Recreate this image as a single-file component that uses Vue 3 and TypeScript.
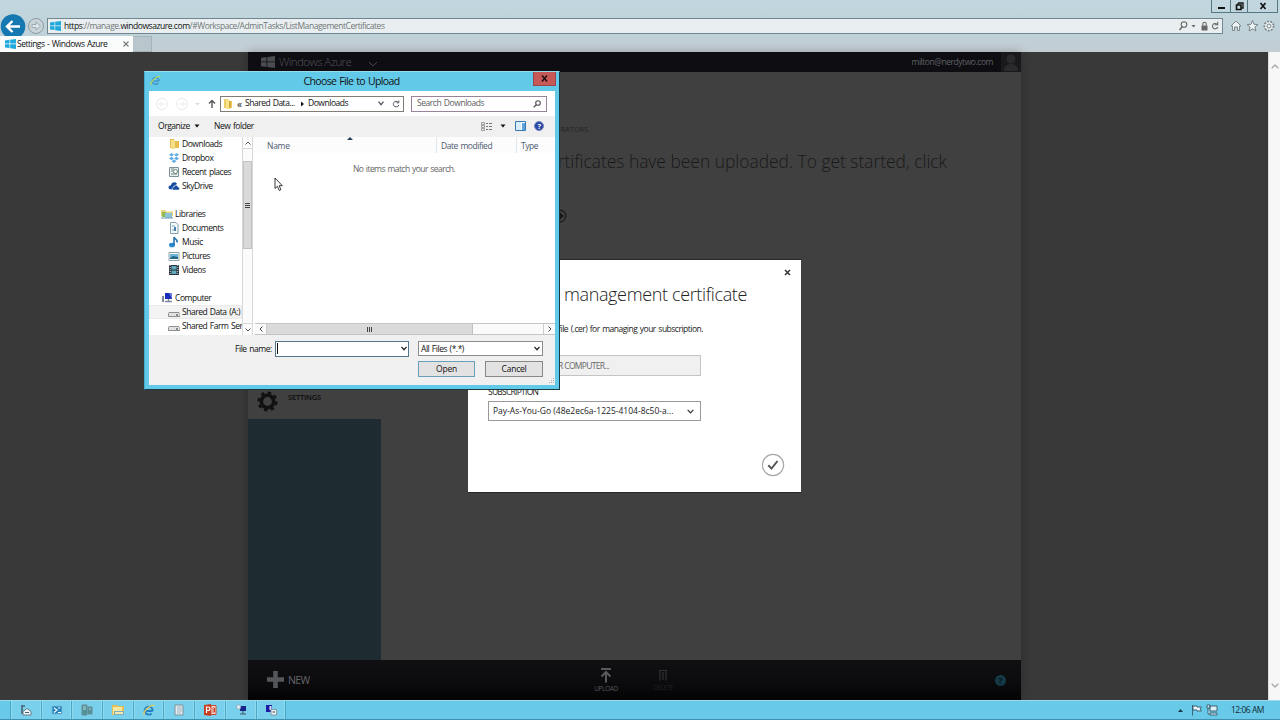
<script setup lang="ts">
interface NavItem {
  label: string
  icon: string
  root?: boolean
  selected?: boolean
}

const navItems: NavItem[] = [
  { label: 'Downloads', icon: 'folder' },
  { label: 'Dropbox', icon: 'dropbox' },
  { label: 'Recent places', icon: 'recent' },
  { label: 'SkyDrive', icon: 'cloud' },
  { label: '', icon: '' },
  { label: 'Libraries', icon: 'library', root: true },
  { label: 'Documents', icon: 'document' },
  { label: 'Music', icon: 'music' },
  { label: 'Pictures', icon: 'picture' },
  { label: 'Videos', icon: 'video' },
  { label: '', icon: '' },
  { label: 'Computer', icon: 'computer', root: true },
  { label: 'Shared Data (A:)', icon: 'drive', selected: true },
  { label: 'Shared Farm Serv', icon: 'drive' },
]

const taskItems: string[] = ['server', 'shell', 'manager', 'explorer', 'ie', 'notepad', 'powerpoint', 'remote', 'desktop']
</script>

<template>
  <div class="screen">
    <header class="chrome">
      <div class="caption">
        <span class="cap min"><i></i></span>
        <span class="cap max">
          <svg width="9" height="9" viewBox="0 0 9 9"><path d="M3 1h5v5H6.500M3 1v1.500" fill="none" stroke="#111" stroke-width="1.300" /><path d="M1.500 3h4.500v4.500H1.500z" fill="none" stroke="#111" stroke-width="1.600" /></svg>
        </span>
        <span class="cap close">
          <svg width="8" height="8" viewBox="0 0 8 8"><path d="M1.500 1l5 6M6.500 1l-5 6" stroke="#111" stroke-width="1.600" /></svg>
        </span>
      </div>
      <div class="address-row">
        <svg class="back" width="26" height="25" viewBox="0 0 26 25"><circle cx="13" cy="12.500" r="12.300" fill="#1678b0" /><path d="M20 12.500H7.500M12.500 7l-5.500 5.500 5.500 5.500" fill="none" stroke="#fff" stroke-width="2.400" /></svg>
        <svg class="forward" width="18" height="18" viewBox="0 0 18 18"><circle cx="9" cy="9" r="7.500" fill="#c9d4d8" stroke="#8d9aa1" /><path d="M5 7.500h4V5l4.500 4L9 13v-2.500H5z" fill="#dce5e8" stroke="#929ea4" stroke-width=".8" /></svg>
        <div class="address">
          <svg class="flag" width="11" height="10" viewBox="0 0 11 10"><path d="M0 1.500L4.500.8V4.600H0zM5.200.7L11 0v4.600H5.200zM0 5.300h4.500v3.800L0 8.500zM5.200 5.300H11V10l-5.800-.8z" fill="#20a9dc" /></svg>
          <span class="url"><b>https</b>://manage.<b>windowsazure.com</b>/#Workspace/AdminTasks/ListManagementCertificates</span>
          <svg class="address-tools" width="42" height="12" viewBox="0 0 42 12"><circle cx="6" cy="4.500" r="2.800" fill="none" stroke="#666" stroke-width="1.100" /><path d="M4 7L1.500 10" stroke="#666" stroke-width="1.400" /><path d="M13.500 5h4l-2 2.500z" fill="#666" /><path d="M23.500 5.500h6v5h-6z" fill="#666" /><path d="M24.800 5.500V4a1.700 1.700 0 0 1 3.400 0v1.500" fill="none" stroke="#666" stroke-width="1.100" /><path d="M38.800 4A2.700 2.700 0 1 0 39.700 7M39.700 1.800v3h-3" fill="none" stroke="#666" stroke-width="1.100" /></svg>
        </div>
        <svg class="ie-tools" width="46" height="14" viewBox="0 0 46 14"><g fill="#eef3f4" stroke="#7b858a" stroke-width="1"><path d="M1 7l5-5 5 5H9.500v4.500h-2V8h-3v3.500h-2V7z" /><path d="M22.500 1.500l1.500 3.800 4 .2-3.100 2.500 1.100 4-3.500-2.200-3.500 2.200 1.100-4L17 5.500l4-.2z" /><circle cx="39" cy="7" r="4.600" stroke-dasharray="2 1.200" stroke-width="1.800" /><circle cx="39" cy="7" r="2" /></g></svg>
      </div>
      <div class="tabs">
        <div class="tab">
          <svg class="flag" width="11" height="10" viewBox="0 0 11 10"><path d="M0 1.500L4.500.8V4.600H0zM5.200.7L11 0v4.600H5.200zM0 5.300h4.500v3.800L0 8.500zM5.200 5.300H11V10l-5.800-.8z" fill="#20a9dc" /></svg>
          <span>Settings - Windows Azure</span>
          <svg class="tab-x" width="6" height="6" viewBox="0 0 6 6"><path d="M.5.5l5 5M5.500.5l-5 5" stroke="#777" stroke-width="1.100" /></svg>
        </div>
        <div class="new-tab"></div>
      </div>
    </header>

    <main class="viewport">
      <div class="portal">
        <div class="portal-head">
          <svg class="brand-flag" width="14" height="12" viewBox="0 0 14 12"><path d="M0 1.800L5.500 1v4.500H0zM6.300.9L14 0v5.500H6.300zM0 6.300h5.500V11L0 10.200zM6.300 6.300H14V12l-7.700-1z" fill="#4b4c50" /></svg>
          <span class="brand">Windows Azure</span>
          <svg class="brand-chev" width="10" height="6" viewBox="0 0 10 6"><path d="M1 1l4 4 4-4" fill="none" stroke="#45464a" /></svg>
          <span class="account">milton@nerdytwo.com</span>
          <span class="avatar"><svg width="20" height="20" viewBox="0 0 20 20"><circle cx="10" cy="7" r="4.500" fill="#2a2a2d" /><path d="M3 19c0-5 3-7 7-7s7 2 7 7z" fill="#2a2a2d" /></svg></span>
        </div>
        <div class="portal-main">
          <aside class="side">
            <div class="settings">
              <svg width="21" height="21" viewBox="0 0 21 21"><circle cx="10.500" cy="10.500" r="6.200" fill="none" stroke="#111" stroke-width="3.600" /><circle cx="10.500" cy="10.500" r="8.800" fill="none" stroke="#111" stroke-width="2.600" stroke-dasharray="3.450 3.450" /></svg>
              <span>SETTINGS</span>
            </div>
            <div class="teal"></div>
          </aside>
          <section class="content">
            <div class="crumb">ADMINISTRATORS</div>
            <div class="empty">No management certificates have been uploaded. To get started, click</div>
            <div class="go"><svg width="14" height="14" viewBox="0 0 14 14"><circle cx="7" cy="7" r="5.800" fill="none" stroke="#191919" stroke-width="1.200" /><path d="M3 6h4V3.500L11 7l-4 3.500V8H3z" fill="#191919" /></svg></div>
          </section>
        </div>
        <footer class="commands">
          <svg class="plus" width="17" height="17" viewBox="0 0 17 17"><path d="M6.200 0h4.600v6.200H17v4.600h-6.200V17H6.200v-6.200H0V6.200h6.200z" fill="#54565a" /></svg>
          <span class="new">NEW</span>
          <div class="command upload">
            <svg width="12" height="15" viewBox="0 0 12 15"><path d="M1 1h10M6 14.500V5M1.500 8.500L6 4l4.500 4.500" fill="none" stroke="#58595b" stroke-width="2" /></svg>
            <span>UPLOAD</span>
          </div>
          <div class="command delete">
            <svg width="10" height="13" viewBox="0 0 10 13"><path d="M1 1.500h8M2 2v9.500M8 2v9.500M5 3v8" fill="none" stroke="#303032" stroke-width="1.200" /></svg>
            <span>DELETE</span>
          </div>
          <span class="help">?</span>
        </footer>
      </div>
      <div class="scrollbar">
        <svg width="8" height="5" viewBox="0 0 8 5"><path d="M.7 4.300L4 1l3.300 3.300" fill="none" stroke="#aaa" stroke-width="1.400" /></svg>
        <svg width="8" height="5" viewBox="0 0 8 5"><path d="M.7.7L4 4 7.300.7" fill="none" stroke="#aaa" stroke-width="1.400" /></svg>
      </div>
    </main>

    <section class="modal">
      <svg class="modal-x" width="7" height="7" viewBox="0 0 7 7"><path d="M1 1l5 5M6 1L1 6" stroke="#333" stroke-width="1.500" /></svg>
      <h1>Upload a management certificate</h1>
      <p>Upload a certificate file (.cer) for managing your subscription.</p>
      <div class="browse"><span>BROWSE YOUR COMPUTER...</span></div>
      <div class="label">SUBSCRIPTION</div>
      <div class="subscription">
        <span>Pay-As-You-Go (48e2ec6a-1225-4104-8c50-a...</span>
        <svg width="7" height="5" viewBox="0 0 7 5"><path d="M.7.8l2.800 3L6.300.8" fill="none" stroke="#333" stroke-width="1.200" /></svg>
      </div>
      <svg class="accept" width="24" height="24" viewBox="0 0 24 24"><circle cx="12" cy="12" r="10.600" fill="#fff" stroke="#aaa" stroke-width="1.200" /><path d="M7.300 12.300l3.200 3.300L16.500 8" fill="none" stroke="#555" stroke-width="2" /></svg>
    </section>

    <section class="dialog">
      <div class="dialog-title">
        <svg class="dialog-ie" width="13" height="13" viewBox="0 0 13 13"><path d="M10 7H4.500M10 7A3.400 3.400 0 1 0 9.300 9" fill="none" stroke="#4594cc" stroke-width="1.500" /><path d="M2 11C1 9 6 2 11.500 2.500" fill="none" stroke="#b9d957" stroke-width="1.200" /></svg>
        <span>Choose File to Upload</span>
        <div class="dialog-close"><svg width="7" height="7" viewBox="0 0 7 7"><path d="M1 .5l5 6M6 .5l-5 6" stroke="#21110f" stroke-width="1.500" /></svg></div>
      </div>
      <div class="dialog-body">
        <div class="dialog-nav">
          <svg class="history" width="52" height="14" viewBox="0 0 52 14"><g fill="none" stroke="#e9e9e9"><circle cx="7" cy="7" r="5.500" /><path d="M10 7H4M6.500 4.500L4 7l2.500 2.500" /><circle cx="27" cy="7" r="5.500" /><path d="M24 7h6M27.500 4.500L30 7l-2.500 2.500" /></g><path d="M40 6h5l-2.500 2.500z" fill="#ddd" /></svg>
          <svg class="up" width="8" height="9" viewBox="0 0 8 9"><path d="M4 9V1.500M1 4.500l3-3 3 3" fill="none" stroke="#555" stroke-width="1.400" /></svg>
          <div class="path">
            <svg class="path-folder" width="10" height="11" viewBox="0 0 10 11"><path d="M1 1h4l1 2h3v7H1z" fill="#edcd67" /><path d="M3 2h4v9H3z" fill="#f8e58e" /><path d="M6 3h2v7H6z" fill="#d8aa3a" /></svg>
            <span class="laquo">«</span><span class="crumb-a">Shared Data...</span>
            <svg class="crumb-arrow" width="5" height="6" viewBox="0 0 5 6"><path d="M1 .5L4 3 1 5.500z" fill="#111" /></svg>
            <span class="crumb-b">Downloads</span>
            <svg class="path-chev" width="6" height="5" viewBox="0 0 6 5"><path d="M.5.7L3 3.700 5.500.7" fill="none" stroke="#555" stroke-width="1.300" /></svg>
            <svg class="path-refresh" width="8" height="8" viewBox="0 0 8 8"><path d="M6.200 2.200A2.800 2.800 0 1 0 6.800 5M6.800.5v2.300H4.500" fill="none" stroke="#555" stroke-width="1" /></svg>
          </div>
          <div class="search">
            <span>Search Downloads</span>
            <svg width="8" height="8" viewBox="0 0 8 8"><circle cx="5" cy="3" r="2.300" fill="none" stroke="#555" stroke-width="1.100" /><path d="M3.300 4.700L.7 7.300" stroke="#555" stroke-width="1.300" /></svg>
          </div>
        </div>
        <div class="toolbar">
          <span class="organize">Organize</span>
          <svg class="drop-a" width="6" height="4" viewBox="0 0 6 4"><path d="M.5.5h5L3 3.500z" fill="#111" /></svg>
          <span class="new-folder">New folder</span>
          <svg class="view" width="11" height="9" viewBox="0 0 11 9"><path d="M.5.5h3v2h-3zM.5 3.500h3v2h-3zM.5 6.500h3v2h-3z" fill="none" stroke="#888" stroke-width=".8" /><path d="M5 1.500h2M8 1.500h3M5 4.500h2M8 4.500h3M5 7.500h2M8 7.500h3" stroke="#666" stroke-width=".9" /></svg>
          <svg class="drop-b" width="6" height="4" viewBox="0 0 6 4"><path d="M.5.5h5L3 3.500z" fill="#111" /></svg>
          <svg class="pane" width="11" height="10" viewBox="0 0 11 10"><path d="M.5.5h10v9H.5z" fill="#fff" stroke="#3879b4" /><path d="M1 1h5v8H1z" fill="#d7edfa" /><path d="M7 2h3v7H7z" fill="#5da4dc" /></svg>
          <svg class="query" width="10" height="10" viewBox="0 0 10 10"><circle cx="5" cy="5" r="4.500" fill="#2a48a4" stroke="#7487bb" /><text x="5" y="7.600" text-anchor="middle" font-family="Open Sans, sans-serif" font-size="7.500" font-weight="700" fill="#fff">?</text></svg>
        </div>
        <div class="browser">
          <div class="tree">
            <div v-for="(item, i) in navItems" :key="i" class="node" :class="{ root: item.root, selected: item.selected }">
              <svg v-if="item.icon" width="12" height="12" viewBox="0 0 12 12">
                <g v-if="item.icon === 'folder'"><path d="M2 1h4l1 2h4v7H2z" fill="#e4be50" /><path d="M3 2h4v9H3z" fill="#f7df86" /></g>
                <path v-else-if="item.icon === 'dropbox'" d="M3.500 1L6 2.800 3.500 4.500 1 2.800zM8.500 1L11 2.800 8.500 4.500 6 2.800zM3.500 4.800L6 6.500 3.500 8.200 1 6.500zM8.500 4.800L11 6.500 8.500 8.200 6 6.500zM6 7.500l2.500 1.800L6 11 3.500 9.300z" fill="#5fade2" />
                <g v-else-if="item.icon === 'recent'"><path d="M1.500 1.500h9v9h-9z" fill="#e6eeee" stroke="#7d9298" /><path d="M3 3h3M3 5h2M3 8h6" stroke="#77888b" /><circle cx="7.500" cy="5.500" r="2" fill="#fff" stroke="#60866b" /></g>
                <g v-else-if="item.icon === 'cloud'"><path d="M1 9C-.5 6 2 5 3 5.500c0-3.500 5-4.500 6-1.500L6 6 4 9.500z" fill="#174da0" /><path d="M4.500 10c-1-2 .5-3 1.500-3 .5-2.500 3.500-2 4 0 1.800 0 2 2.500.5 3z" fill="#174da0" stroke="#fff" stroke-width=".5" /></g>
                <g v-else-if="item.icon === 'library'"><path d="M0 2h4l1 1.500h7V8H0z" fill="#ead47b" /><path d="M1 4h4v5H1z" fill="#91bc55" /><path d="M4 5h7v5H4z" fill="#8bc3d9" /><path d="M0 9.500h12v1H0z" fill="#719dac" /></g>
                <g v-else-if="item.icon === 'document'"><path d="M2.500.5H8l2 2v9H2.500z" fill="#f5fafc" stroke="#849eac" /><path d="M4 4h3M4 8h4" stroke="#68a1c6" /><path d="M6 5h2v4H6z" fill="#497eac" /></g>
                <g v-else-if="item.icon === 'music'"><ellipse cx="4" cy="9" rx="3" ry="2.300" fill="#278ace" /><path d="M6 9V1c0 2 4 2 3 5.500" fill="none" stroke="#2676ae" stroke-width="1.600" /></g>
                <g v-else-if="item.icon === 'picture'"><path d="M1 2.500h10v8H1z" fill="#fff" stroke="#8ca5ad" /><path d="M2 4h8v4H2z" fill="#6eb6da" /><path d="M2 8l3-2 5 1v2H2z" fill="#256988" /></g>
                <g v-else-if="item.icon === 'video'"><path d="M1 1h10v10H1z" fill="#27343d" /><path d="M3.500 2h5v3.500h-5zM3.500 6.500h5V10h-5z" fill="#61a9bd" /><path d="M2.200 1v10M9.800 1v10" stroke="#d5d8d8" stroke-dasharray="1 1" /></g>
                <g v-else-if="item.icon === 'computer'"><path d="M4 1h7v6H4z" fill="#1c2db8" /><path d="M8 1l3 6V1z" fill="#6c7dde" /><path d="M1 4h2v6H1z" fill="#7c8899" /><path d="M4 9.500h7M7.500 7v3" stroke="#7c8899" stroke-width="1.300" /></g>
                <g v-else><path d="M1 6.500h10l1 1v3H.5v-3z" fill="#e2e2e2" stroke="#848484" stroke-width=".9" /><path d="M8 9h2" stroke="#333" /></g>
              </svg>
              <span>{{ item.label }}</span>
            </div>
          </div>
          <div class="vscroll">
            <div class="arrow-box"><svg width="6" height="4" viewBox="0 0 6 4"><path d="M.5 3.500L3 1l2.500 2.500" fill="none" stroke="#555" /></svg></div>
            <div class="vthumb"><i></i><i></i><i></i></div>
            <div class="arrow-box low"><svg width="6" height="4" viewBox="0 0 6 4"><path d="M.5.5L3 3 5.500.5" fill="none" stroke="#555" /></svg></div>
          </div>
          <div class="files">
            <div class="columns">
              <span class="c-name">Name<svg width="6" height="3" viewBox="0 0 6 3"><path d="M0 3h6L3 0z" fill="#263b55" /></svg></span>
              <span class="c-date">Date modified</span>
              <span class="c-type">Type</span>
            </div>
            <div class="no-items"><span>No items match your search.</span></div>
            <div class="hscroll">
              <div class="harrow"><svg width="4" height="6" viewBox="0 0 4 6"><path d="M3.500.5L1 3l2.500 2.500" fill="none" stroke="#444" /></svg></div>
              <div class="hthumb"><i></i><i></i><i></i></div>
              <div class="harrow end"><svg width="4" height="6" viewBox="0 0 4 6"><path d="M.5.5L3 3 .5 5.500" fill="none" stroke="#444" /></svg></div>
            </div>
          </div>
        </div>
        <div class="dialog-foot">
          <div class="file-row">
            <span class="file-label">File name:</span>
            <div class="file-input"><i></i><svg width="6" height="5" viewBox="0 0 6 5"><path d="M.5.8L3 3.700 5.500.8" fill="none" stroke="#222" stroke-width="1.300" /></svg></div>
            <div class="filter"><span>All Files (*.*)</span><svg width="6" height="5" viewBox="0 0 6 5"><path d="M.5.8L3 3.700 5.500.8" fill="none" stroke="#222" stroke-width="1.300" /></svg></div>
          </div>
          <div class="button-row">
            <div class="btn primary">Open</div>
            <div class="btn">Cancel</div>
          </div>
          <svg class="grip" width="6" height="6" viewBox="0 0 6 6"><path d="M5 0h1v1H5zM5 2h1v1H5zM5 4h1v1H5zM3 2h1v1H3zM3 4h1v1H3zM1 4h1v1H1z" fill="#aaa" /></svg>
        </div>
      </div>
    </section>

    <svg class="cursor" width="9" height="15" viewBox="0 0 9 15"><path d="M1 1v10.500l2.400-2.200L5.200 13.500l1.700-.8L5.200 8.700h3.100z" fill="#fff" stroke="#222" stroke-width=".9" /></svg>

    <footer class="taskbar">
      <div v-for="task in taskItems" :key="task" class="task" :class="task">
        <svg width="14" height="14" viewBox="0 0 14 14">
          <g v-if="task === 'server'"><path d="M3 2v9M3 3h3" stroke="#4a6572" stroke-width="1.600" /><path d="M4 8.500l4-3 4 3v3.500H4z" fill="#f2f6f8" stroke="#667d88" /><path d="M6 9.500h4" stroke="#456572" /></g>
          <g v-else-if="task === 'shell'"><path d="M2 3h10v8H2z" fill="#2183bd" stroke="#75bbda" /><path d="M4 5l3 2-3 2.500M8 9.500h3M8 5h2" fill="none" stroke="#fff" stroke-width="1.200" /></g>
          <g v-else-if="task === 'manager'"><path d="M2 2h5v10H2zM8 4h4v7H8z" fill="#4e929d" stroke="#668b93" /><path d="M3 4h3M3 6h3M9 6h2" stroke="#bcd8d4" /></g>
          <g v-else-if="task === 'explorer'"><path d="M1 2h5l1 1h6v9H1z" fill="#e3bd55" /><path d="M2 4h9v7H2z" fill="#f6e9a1" /><path d="M3 8h10v4H3z" fill="#81acc0" /><path d="M4 9h8v2H4z" fill="#f3e8ad" /></g>
          <g v-else-if="task === 'ie'"><path d="M10.700 8H4M10.700 8A4 4 0 1 0 9.500 10.500" fill="none" stroke="#2682c4" stroke-width="1.900" /><path d="M2 12C1 9 8 1 12.500 2.500" fill="none" stroke="#e4cd55" stroke-width="1.300" /></g>
          <g v-else-if="task === 'notepad'"><path d="M3 2h8v10H3z" fill="#e6edf1" stroke="#7f929c" /><path d="M5 4h5M5 6h5M5 8h5M5 10h4" stroke="#a0b4c0" /></g>
          <g v-else-if="task === 'powerpoint'"><path d="M1 2l7-1v12l-7-1z" fill="#c43d21" /><path d="M8 2.500h5v9H8z" fill="#faded5" stroke="#c64a2f" /><path d="M3.500 10V4h1.700a1.500 1.500 0 0 1 0 3.500H3.500" fill="none" stroke="#fff" stroke-width="1.200" /><path d="M9.300 5h2.200v2H9.300M9.300 9h2.200V7" fill="none" stroke="#c43d21" /></g>
          <g v-else-if="task === 'remote'"><path d="M6 3h6v5H6z" fill="#1b248c" /><circle cx="4.500" cy="4" r="2.300" fill="#dce9f0" stroke="#7fa4b8" stroke-width=".8" /><path d="M9 8v3M6 11h6" stroke="#435663" /></g>
          <g v-else><path d="M2 2h6v7H2z" fill="#1c1da2" /><path d="M5.500 3h2v4h-2z" fill="#dbe6fa" /><path d="M7 6.500h5.500V12H7z" fill="#edf3f5" stroke="#8298a4" /><path d="M8.500 9h2.500" stroke="#345" /></g>
        </svg>
      </div>
      <div class="tray">
        <svg width="42" height="14" viewBox="0 0 42 14"><path d="M1 9h5L3.500 6z" fill="#183a48" /><path d="M15.500 2v10.500M16 3h4v1h4.500L23 6l1.500 2H20V7h-4z" fill="#eaf6f9" stroke="#315a6a" stroke-width=".9" /><path d="M33 3h7v5h-7zM33 10h7v2h-7zM31 5v6h2M30 2h3v3h-3z" fill="#dceff5" stroke="#315a6a" stroke-width=".9" /></svg>
        <span>12:06 AM</span>
      </div>
    </footer>
  </div>
</template>

<style>
html, body { margin: 0; overflow: hidden; background: #393939; }
</style>

<style scoped>
* { box-sizing: border-box; }
.screen { position: relative; width: 1280px; height: 720px; display: flex; flex-direction: column; overflow: hidden; font-family: "Open Sans", "Noto Sans", sans-serif; font-size: 8.5px; color: #222; line-height: 1; white-space: nowrap; }
svg { display: block; flex: none; }
span { flex: none; }

.chrome { height: 52px; background: linear-gradient(#c2d7df, #bfd2da 60%, #c3cdd2); display: flex; flex-direction: column; flex: none; }
.caption { height: 13px; display: flex; justify-content: flex-end; padding-right: 2px; }
.cap { height: 13px; border: 1px solid #557883; border-top: 0; border-right: 0; display: flex; align-items: center; justify-content: center; }
.min { width: 19px; }
.min i { width: 7px; height: 2px; background: #111; margin-top: 3px; }
.max { width: 17px; }
.close { width: 31px; border-right: 1px solid #557883; }
.address-row { height: 23px; display: flex; align-items: center; padding-top: 3px; }
.forward { margin: 0 2px 0 1px; }
.address { width: 1176px; height: 16px; background: #e9eff0; border: 1px solid #71868f; display: flex; align-items: center; padding: 0 2px; }
.url { margin-left: 3px; margin-right: auto; padding-top: 1px; color: #727779; letter-spacing: -.45px; }
.url b { font-weight: 400; color: #111; }
.ie-tools { margin-left: 7px; }
.tabs { display: flex; height: 16px; }
.tab { width: 133px; background: #fafcfc; display: flex; align-items: center; padding-left: 5px; color: #111; letter-spacing: -.5px; word-spacing: .8px; }
.tab span { padding-top: 1px; }
.tab .flag { margin-right: 1px; }
.tab-x { margin-left: auto; margin-right: 4px; }
.new-tab { width: 19px; background: #b9c6cb; border: 1px solid #a3b4bb; border-left: 0; }

.viewport { height: 648px; flex: none; background: #393939; display: flex; }
.portal { width: 773px; margin-left: 248px; background: #404040; display: flex; flex-direction: column; box-shadow: 0 0 9px rgba(0, 0, 0, .25); }
.portal-head { height: 20px; background: #0d0d12; display: flex; align-items: center; padding-left: 13px; }
.brand { color: #55565b; font-size: 11.5px; font-weight: 300; margin-left: 4px; width: 74px; letter-spacing: -.57px; }
.brand-chev { margin-left: 15px; margin-top: 3px; }
.account { margin-left: auto; color: #606064; letter-spacing: -.45px; padding-top: 1px; }
.avatar { margin-left: 8px; width: 20px; height: 20px; background: #19191c; }
.portal-main { height: 588px; display: flex; }
.side { width: 133px; display: flex; flex-direction: column; justify-content: flex-end; }
.settings { height: 38px; display: flex; padding: 10px 0 0 9px; color: #0c0c0c; font-weight: 600; font-size: 7.5px; letter-spacing: -.2px; gap: 10px; line-height: 13px; }
.teal { height: 241px; background: #1e2c32; }
.content { width: 640px; padding-top: 54px; color: #191919; }
.crumb { width: 207px; text-align: right; font-size: 7.5px; height: 8px; color: #252525; letter-spacing: -.1px; }
.empty { width: 566px; display: flex; justify-content: flex-end; margin-top: 17px; font-size: 17.4px; height: 20px; line-height: 20px; font-weight: 300; }
.go { margin: 38px 0 0 172px; }
.commands { height: 40px; background: linear-gradient(#101013, #0b0b0e 60%, #030303); display: flex; align-items: center; padding-left: 19px; }
.new { color: #656669; font-size: 10.5px; margin-left: 4px; width: 22px; letter-spacing: -.6px; padding-top: 1px; }
.plus { margin-top: -1px; }
.command { display: flex; flex-direction: column; align-items: center; gap: 3px; color: #55565a; font-size: 6.5px; letter-spacing: -.4px; width: 30px; }
.upload { margin-left: 281px; }
.delete { margin-left: 27px; color: #202022; }
.help { width: 11px; height: 11px; margin-left: auto; margin-right: 15px; border-radius: 50%; background: #153a47; color: #0b1519; font-weight: 700; line-height: 11px; text-align: center; font-size: 9px; }
.scrollbar { margin-left: auto; width: 12px; background: #f7f7f7; border-left: 1px solid #ddd; display: flex; flex-direction: column; justify-content: space-between; align-items: center; padding: 12px 0; }

.modal { position: absolute; left: 468px; top: 259px; width: 333px; height: 234px; background: #fff; border: 1px solid #292929; border-left: 0; border-right: 0; display: flex; flex-direction: column; padding-left: 20px; }
.modal-x { margin: 9px 0 0 296px; }
.modal h1 { margin: 5px 0 0; width: 259px; height: 26px; line-height: 26px; display: flex; justify-content: flex-end; font-weight: 300; font-size: 18px; letter-spacing: -.36px; color: #222; }
.modal p { margin: 16px 0 0; width: 215px; height: 12px; line-height: 12px; display: flex; justify-content: flex-end; font-size: 8.5px; color: #222; letter-spacing: -.5px; word-spacing: .8px; }
.browse { width: 213px; height: 21px; margin-top: 20px; border: 1px solid #c4c4c4; background: #f0f0f0; display: flex; align-items: center; color: #686868; }
.browse span { width: 120px; display: flex; justify-content: flex-end; letter-spacing: -.68px; padding-top: 1px; }
.label { height: 10px; line-height: 10px; margin-top: 11px; letter-spacing: -.75px; }
.subscription { width: 213px; height: 20px; margin-top: 4px; border: 1px solid #999; display: flex; align-items: center; justify-content: space-between; padding: 0 6px 0 4px; }
.accept { margin: 32px 0 0 273px; }

.dialog { position: absolute; left: 144px; top: 71px; width: 416px; height: 319px; background: #62c9e8; border: 1px solid #173a47; border-top-color: #9bdcec; border-left-color: #43acd0; padding: 0 5px 4px 4px; display: flex; flex-direction: column; color: #111; letter-spacing: -.46px; word-spacing: .8px; }
.dialog-title { height: 19px; display: flex; align-items: center; font-size: 10.5px; position: relative; justify-content: center; padding-bottom: 1px; }
.dialog-title span { letter-spacing: -.62px; }
.dialog-ie { position: absolute; left: 0; top: 2px; }
.dialog-close { position: absolute; right: -2px; top: 0; width: 23px; height: 14px; background: #c75858; border: 1px solid #9d444d; border-top: 0; display: flex; align-items: center; justify-content: center; }
.dialog-body { width: 406px; height: 294px; background: #fff; display: flex; flex-direction: column; }
.dialog-nav { height: 25px; display: flex; align-items: center; padding-left: 6px; }
.up { margin-left: 1px; }
.path { width: 184px; height: 16px; margin-left: 4px; border: 1px solid #827c76; display: flex; align-items: center; padding-left: 2px; }
.laquo { margin-left: 4px; width: 8px; font-size: 10px; }
.crumb-a { width: 49px; letter-spacing: -.48px; }
.crumb-arrow { margin-left: 6px; margin-right: 3px; }
.crumb-b { width: 44px; }
.path-chev { margin-left: 26px; }
.path-refresh { margin-left: 8px; }
.search { width: 136px; height: 16px; margin-left: 7px; border: 1px solid #98839a; display: flex; align-items: center; justify-content: space-between; padding: 0 5px; color: #606060; letter-spacing: -.44px; }
.toolbar { height: 21px; background: #f0f0f0; display: flex; align-items: center; padding: 0 0 1px 9px; }
.organize { width: 36px; }
.new-folder { width: 44px; margin-left: 14px; }
.view { margin-left: 223px; }
.drop-b { margin-left: 8px; }
.pane { margin-left: 9px; }
.query { margin-left: 8px; }
.browser { height: 198px; display: flex; overflow: hidden; }
.tree { width: 93px; overflow: hidden; }
.node { height: 14px; display: flex; align-items: center; padding-left: 19px; }
.node span { padding-top: 1px; }
.node svg { margin-right: 2px; }
.node.root { padding-left: 12px; }
.node.selected { background: #f3f3f3; box-shadow: inset 0 0 0 1px #eaeaea; }
.vscroll { width: 11px; height: 198px; background: #fbfbfb; border-left: 1px solid #d9d9d9; border-right: 1px solid #d9d9d9; display: flex; flex-direction: column; }
.arrow-box { height: 12px; display: flex; align-items: center; justify-content: center; border-bottom: 1px solid #d5d5d5; }
.vthumb { height: 88px; margin-top: 12px; background: #dadada; border: 1px solid #c1c1c1; display: flex; flex-direction: column; align-items: center; justify-content: center; gap: 1px; }
.vthumb i { width: 5px; height: 1px; background: #444; }
.low { margin-top: auto; border-top: 1px solid #d5d5d5; border-bottom: 0; }
.files { width: 302px; display: flex; flex-direction: column; }
.columns { height: 16px; display: flex; color: #4c5b6c; line-height: 18px; background: #fcfcfd; letter-spacing: -.45px; }
.c-name { width: 184px; padding-left: 14px; border-right: 1px solid #e0e8ef; display: flex; justify-content: space-between; letter-spacing: -.25px; }
.c-name svg { margin-right: 83px; }
.c-date { width: 80px; padding-left: 4px; border-right: 1px solid #e0e8ef; }
.c-type { padding-left: 4px; }
.no-items { display: flex; justify-content: center; margin-top: 11px; height: 10px; line-height: 10px; color: #666; letter-spacing: -.55px; }
.hscroll { height: 12px; margin-top: auto; background: #fafafa; border-top: 1px solid #c5c5c5; border-bottom: 1px solid #c5c5c5; display: flex; margin-left: 2px; }
.harrow { width: 12px; display: flex; align-items: center; justify-content: center; border-right: 1px solid #ccc; }
.end { margin-left: auto; width: 12px; border-right: 0; border-left: 1px solid #ccc; }
.hthumb { width: 206px; background: #dadada; border-right: 1px solid #c1c1c1; display: flex; align-items: center; justify-content: center; gap: 1px; }
.hthumb i { width: 1px; height: 5px; background: #444; }
.dialog-foot { height: 50px; background: #f0f0f0; position: relative; }
.file-row { display: flex; align-items: center; padding-top: 5px; height: 22px; }
.file-label { margin-left: 86px; width: 36px; letter-spacing: -.44px; padding-top: 1px; }
.file-input { margin-left: 4px; width: 134px; height: 16px; background: #fff; border: 1px solid #55758a; display: flex; align-items: center; justify-content: space-between; padding: 0 1px; }
.file-input i { width: 1px; height: 11px; background: #111; }
.filter { margin-left: 9px; width: 125px; height: 15px; background: #fff; border: 1px solid #8c8c8c; display: flex; align-items: center; justify-content: space-between; padding: 0 2px; }
.filter span { padding-top: 1px; }
.button-row { display: flex; margin: 4px 0 0 269px; gap: 10px; }
.btn { width: 58px; height: 16px; background: #e2e2e2; border: 1px solid #888; display: flex; align-items: center; justify-content: center; letter-spacing: -.25px; }
.primary { width: 57px; border-color: #68a0bc; }
.grip { position: absolute; right: 1px; bottom: 1px; }
.cursor { position: absolute; left: 274px; top: 177px; }

.taskbar { height: 20px; background: #68c9e8; border-top: 1px solid #98dced; border-bottom: 1px solid #3f91af; display: flex; padding-left: 10px; }
.task { width: 30.7px; display: flex; align-items: center; justify-content: center; border-left: 1px solid #4aa8c7; box-shadow: inset 1px 0 #8ed9ee, inset -1px 0 #8ed9ee; background: #78d0ec; }
.task.desktop { border-right: 1px solid #4aa8c7; }
.tray { margin-left: auto; display: flex; align-items: center; padding-right: 15px; color: #112a34; }
.tray span { width: 34px; margin-left: 12px; letter-spacing: -.5px; }
</style>
